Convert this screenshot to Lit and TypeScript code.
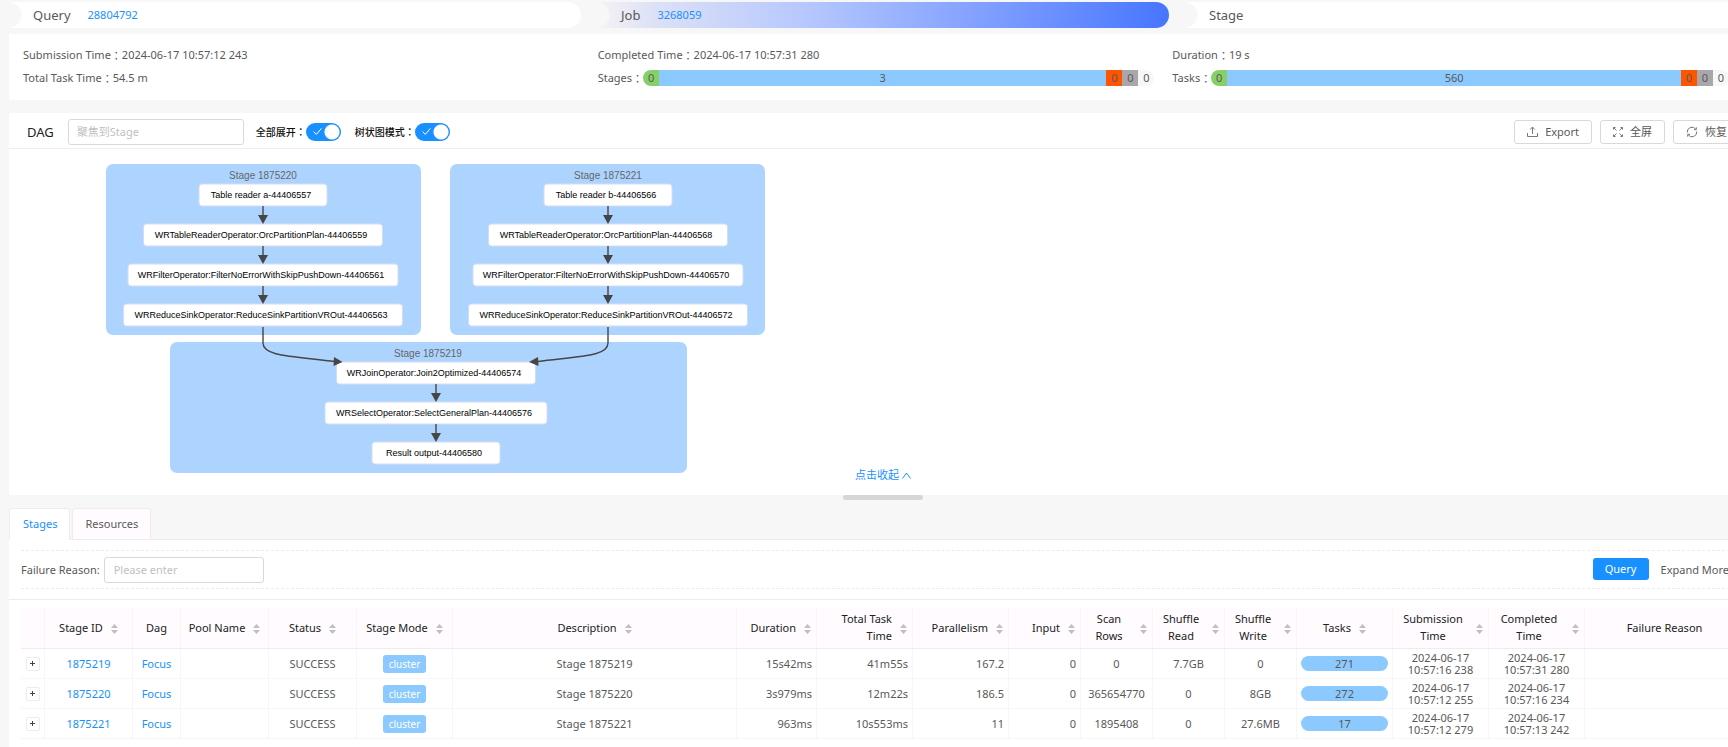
import { LitElement, html, css, svg, nothing } from "lit";
import { customElement, property } from "lit/decorators.js";
import { classMap } from "lit/directives/class-map.js";

type Align = "center" | "right";

interface Column {
  title: string;
  width?: number;
  align?: Align;
  sortable?: boolean;
}

interface StageRow {
  id: string;
  duration: string;
  taskTime: string;
  parallelism: string;
  input: string;
  scanRows: string;
  shuffleRead: string;
  shuffleWrite: string;
  tasks: string;
  submitted: [string, string];
  completed: [string, string];
}

interface DagNode {
  label: string;
  width: number;
}

interface DagCluster {
  title: string;
  x: number;
  y: number;
  width: number;
  height: number;
  cx: number;
  titleX: number;
  nodes: DagNode[];
}

const COLUMNS: Column[] = [
  { title: "", width: 24 },
  { title: "Stage ID", width: 88, sortable: true },
  { title: "Dag", width: 48 },
  { title: "Pool Name", width: 88, sortable: true },
  { title: "Status", width: 88, sortable: true },
  { title: "Stage Mode", width: 96, sortable: true },
  { title: "Description", sortable: true },
  { title: "Duration", width: 80, align: "right", sortable: true },
  { title: "Total Task Time", width: 96, align: "right", sortable: true },
  { title: "Parallelism", width: 96, align: "right", sortable: true },
  { title: "Input", width: 72, align: "right", sortable: true },
  { title: "Scan Rows", width: 72, sortable: true },
  { title: "Shuffle Read", width: 72, sortable: true },
  { title: "Shuffle Write", width: 72, sortable: true },
  { title: "Tasks", width: 96, sortable: true },
  { title: "Submission Time", width: 96, sortable: true },
  { title: "Completed Time", width: 96, sortable: true },
  { title: "Failure Reason", width: 160 },
];

const ROWS: StageRow[] = [
  {
    id: "1875219", duration: "15s42ms", taskTime: "41m55s", parallelism: "167.2", input: "0",
    scanRows: "0", shuffleRead: "7.7GB", shuffleWrite: "0", tasks: "271",
    submitted: ["2024-06-17", "10:57:16 238"], completed: ["2024-06-17", "10:57:31 280"],
  },
  {
    id: "1875220", duration: "3s979ms", taskTime: "12m22s", parallelism: "186.5", input: "0",
    scanRows: "365654770", shuffleRead: "0", shuffleWrite: "8GB", tasks: "272",
    submitted: ["2024-06-17", "10:57:12 255"], completed: ["2024-06-17", "10:57:16 234"],
  },
  {
    id: "1875221", duration: "963ms", taskTime: "10s553ms", parallelism: "11", input: "0",
    scanRows: "1895408", shuffleRead: "0", shuffleWrite: "27.6MB", tasks: "17",
    submitted: ["2024-06-17", "10:57:12 279"], completed: ["2024-06-17", "10:57:13 242"],
  },
];

const CLUSTERS: DagCluster[] = [
  {
    title: "Stage 1875220", x: 97, y: 15, width: 315, height: 171, cx: 254, titleX: 254,
    nodes: [
      { label: "Table reader a-44406557", width: 128 },
      { label: "WRTableReaderOperator:OrcPartitionPlan-44406559", width: 239 },
      { label: "WRFilterOperator:FilterNoErrorWithSkipPushDown-44406561", width: 270 },
      { label: "WRReduceSinkOperator:ReduceSinkPartitionVROut-44406563", width: 279 },
    ],
  },
  {
    title: "Stage 1875221", x: 441, y: 15, width: 315, height: 171, cx: 599, titleX: 599,
    nodes: [
      { label: "Table reader b-44406566", width: 128 },
      { label: "WRTableReaderOperator:OrcPartitionPlan-44406568", width: 239 },
      { label: "WRFilterOperator:FilterNoErrorWithSkipPushDown-44406570", width: 270 },
      { label: "WRReduceSinkOperator:ReduceSinkPartitionVROut-44406572", width: 279 },
    ],
  },
  {
    title: "Stage 1875219", x: 161, y: 193, width: 517, height: 131, cx: 427, titleX: 419,
    nodes: [
      { label: "WRJoinOperator:Join2Optimized-44406574", width: 199 },
      { label: "WRSelectOperator:SelectGeneralPlan-44406576", width: 222 },
      { label: "Result output-44406580", width: 128 },
    ],
  },
];

const FONT = css`"Noto Sans", "Noto Sans CJK SC", sans-serif`;

/* Full-width colon, centred in its em box. */
const COLON = css`
  .colon { font-family: "Noto Sans CJK TC", sans-serif; line-height: 1; }
`;

@customElement("count-bar")
export class CountBar extends LitElement {
  @property({ type: Array }) counts: number[] = [0, 0, 0, 0, 0];

  static styles = css`
    :host { display: block; flex: 1; min-width: 0; }
    .bar { display: flex; height: 16px; border-radius: 8px; overflow: hidden; line-height: 16px; text-align: center; }
    .seg { flex: 0 0 16px; }
    .done { background: #87d068; }
    .main { flex: 1; background: #8cc9ff; }
    .failed { background: #ff5500; }
    .skipped { background: #aaa7aa; }
    .rest { background: #f7f7f7; }
  `;

  render() {
    const kinds = ["done", "main", "failed", "skipped", "rest"];
    return html`<div class="bar">
      ${this.counts.map((n, i) => html`<span class="seg ${kinds[i]}">${n}</span>`)}
    </div>`;
  }
}

@customElement("toggle-switch")
export class ToggleSwitch extends LitElement {
  @property() label = "";

  static styles = [COLON, css`
    :host { display: block; }
    .wrap { display: flex; align-items: center; font-size: 10px; line-height: 18px; color: #111; font-weight: 500; }
    .track { display: grid; align-items: center; }
    .box, .tick { grid-area: 1 / 1; }
    .box {
      appearance: none; margin: 0; width: 35px; height: 18px; border-radius: 9px;
      background: radial-gradient(circle at 9px 9px, #fff 7px, transparent 8px) #bfbfbf;
    }
    .box:checked { background: radial-gradient(circle at 26px 9px, #fff 7px, transparent 8px) #1890ff; }
    .tick { margin-left: 7px; pointer-events: none; }
  `];

  render() {
    return html`<label class="wrap">
      <span>${this.label}</span><span class="colon">：</span>
      <span class="track">
        <input class="box" type="checkbox" checked />
        <svg class="tick" width="9" height="9" viewBox="0 0 9 9" fill="none" stroke="#fff">
          <path d="M0.6 4.6 L3.3 7.4 L8.4 1.4" />
        </svg>
      </span>
    </label>`;
  }
}

@customElement("stage-dag")
export class StageDag extends LitElement {
  static styles = css`
    :host { display: block; }
    .canvas { display: block; width: 100%; height: 324px; }
    .cluster { fill: #add4ff; }
    .node { fill: #fff; stroke: #d6dcf0; }
    .title { fill: #666; font: 10px "Liberation Sans", Arial, sans-serif; text-anchor: middle; }
    .label { fill: #000; font: 9px "Liberation Sans", Arial, sans-serif; text-anchor: middle; }
    .edge { fill: none; stroke: #464646; stroke-width: 1.4; }
    .head { fill: #464646; }
  `;

  private cluster(c: DagCluster) {
    return svg`
      <rect class="cluster" x=${c.x} y=${c.y} width=${c.width} height=${c.height} rx="7" />
      <text class="title" x=${c.titleX} y=${c.y + 15}>${c.title}</text>
      ${c.nodes.map((n, i) => {
        const top = c.y + 20 + i * 40;
        return svg`
          <rect class="node" x=${c.cx - n.width / 2} y=${top} width=${n.width} height="22" rx="3" />
          <text class="label" x=${c.cx - 2} y=${top + 14}>${n.label}</text>
          ${i > 0
            ? svg`<path class="edge" d="M${c.cx} ${top - 18} V${top - 6}" />
                <path class="head" d="M${c.cx - 5} ${top - 9} h10 l-5 9 z" />`
            : nothing}`;
      })}`;
  }

  render() {
    return html`<svg class="canvas" role="img" aria-label="DAG">
      ${CLUSTERS.map((c) => this.cluster(c))}
      <path class="edge" d="M254 178 V194 C254 207 280 207 326 212.5" />
      <path class="head" d="M325 208 L333.500 213 L324.500 217 z" />
      <path class="edge" d="M599 178 V194 C599 207 574 207 529 212.500" />
      <path class="head" d="M529 208 L520 213 L529.500 217 z" />
    </svg>`;
  }
}

@customElement("stage-table")
export class StageTable extends LitElement {
  static styles = css`
    :host { display: block; }
    .table { width: 100%; table-layout: fixed; border-collapse: separate; border-spacing: 0; font-size: 11px; }
    .th, .td { box-sizing: border-box; text-align: center; overflow: visible; }
    .th {
      height: 41px; padding: 0 5px 2px; background: #fffbff; color: #222; font-weight: 400; line-height: 17px;
      border-right: 1px solid #f7f7f7; border-bottom: 1px solid #f0ebf0;
    }
    .td {
      height: 30px; padding: 0 4px; line-height: 12px;
      border-right: 1px solid #f6f6f6; border-bottom: 1px solid #f6f6f6;
    }
    .right { text-align: right; }
    .head { display: inline-flex; align-items: center; gap: 8px; max-width: 100%; vertical-align: middle; }
    .sort { flex: none; margin-top: 3px; }
    .link { color: #1890ff; text-decoration: none; }
    .plus {
      display: block; margin: 0 auto; width: 14px; height: 14px; padding: 0;
      border: 1px solid #ececec; border-radius: 2px; background: #fff;
    }
    .plus-icon { display: block; margin: 0 auto; }
    .tag {
      display: inline-block; box-sizing: border-box; height: 18px; padding: 0 6px; line-height: 18px;
      border-radius: 3px; background: #8cc9ff; color: #fff; font-size: 10px; vertical-align: middle;
    }
    .bar { display: block; margin: 0; height: 15px; line-height: 15px; border-radius: 8px; background: #8cc9ff; }
  `;

  private head(c: Column) {
    return html`<th scope="col" class=${classMap({ th: true, right: c.align === "right" })}>
      ${c.sortable
        ? html`<span class="head"><span>${c.title}</span>
            <svg class="sort" width="7" height="10" viewBox="0 0 7 10" fill="#bfbfbf">
              <path d="M3.500 0 L7 4 H0 Z M3.500 10 L7 6 H0 Z" />
            </svg></span>`
        : c.title}
    </th>`;
  }

  private row(r: StageRow) {
    return html`<tr>
      <td class="td">
        <button class="plus" aria-label="Expand row">
          <svg class="plus-icon" width="5" height="5" viewBox="0 0 5 5" stroke="#444">
            <path d="M0 2.5 H5 M2.5 0 V5" />
          </svg>
        </button>
      </td>
      <td class="td"><a class="link" href="#stage">${r.id}</a></td>
      <td class="td"><a class="link" href="#dag">Focus</a></td>
      <td class="td"></td>
      <td class="td">SUCCESS</td>
      <td class="td"><span class="tag">cluster</span></td>
      <td class="td">Stage ${r.id}</td>
      <td class="td right">${r.duration}</td>
      <td class="td right">${r.taskTime}</td>
      <td class="td right">${r.parallelism}</td>
      <td class="td right">${r.input}</td>
      <td class="td">${r.scanRows}</td>
      <td class="td">${r.shuffleRead}</td>
      <td class="td">${r.shuffleWrite}</td>
      <td class="td"><span class="bar">${r.tasks}</span></td>
      <td class="td">${r.submitted[0]}<br />${r.submitted[1]}</td>
      <td class="td">${r.completed[0]}<br />${r.completed[1]}</td>
      <td class="td"></td>
    </tr>`;
  }

  render() {
    return html`<table class="table">
      <colgroup>
        ${COLUMNS.map((c) => (c.width ? html`<col width=${c.width} />` : html`<col />`))}
      </colgroup>
      <thead><tr>${COLUMNS.map((c) => this.head(c))}</tr></thead>
      <tbody>${ROWS.map((r) => this.row(r))}</tbody>
    </table>`;
  }
}

@customElement("app-root")
export class AppRoot extends LitElement {
  static styles = [COLON, css`
    :host {
      display: block; min-height: 100vh; overflow: hidden; background: #f7f7f7;
      color: #595959; font-family: ${FONT}; font-size: 11px; line-height: 16px;
    }
    /* The page is laid out slightly wider than the viewport and clipped at its right edge. */
    .page { margin: 0 -29px 0 9px; padding-top: 2px; }
    .panel { background: #fff; }

    .crumbs { display: grid; grid-template-columns: repeat(3, 1fr); gap: 16px; }
    .crumb {
      display: flex; align-items: center; gap: 17px; height: 26px; padding-left: 24px;
      border-radius: 0 13px 13px 0;
      background: radial-gradient(circle at 0 13px, #f7f7f7 12px, transparent 13px) #fff;
    }
    .active {
      background:
        radial-gradient(circle at 0 13px, #f7f7f7 12px, transparent 13px),
        linear-gradient(90deg, #f7f3f5 0%, #dce1f5 10%, #b4c6ff 38%, #4775ff 100%);
    }
    .crumb-name { font-size: 13px; }
    .link { color: #1890ff; text-decoration: none; }

    .summary {
      display: grid; grid-template-columns: repeat(3, 1fr); row-gap: 7px;
      margin-top: 6px; padding: 13px 10px 14px 14px;
    }
    .fact { display: flex; align-items: center; padding-right: 18px; white-space: nowrap; }

    .dag-panel { margin-top: 13px; }
    .toolbar {
      display: flex; align-items: center; height: 33px; padding: 2px 17px 0 18px; border-bottom: 1px solid #f0ebf0;
    }
    .heading { margin: 0 14px 0 0; font-size: 13px; font-weight: 400; color: #222; }
    .input {
      box-sizing: border-box; width: 160px; height: 26px; padding: 0 9px; border: 1px solid #d9d9d9;
      border-radius: 3px; background: #fff; color: #222; font: inherit;
    }
    .input::placeholder { color: #bfbfbf; opacity: 1; }
    .focus-input { width: 176px; margin-right: 12px; padding: 0 8px; }
    .toggles { display: flex; gap: 14px; }
    .actions { display: flex; gap: 8px; margin-left: auto; }
    .btn {
      display: flex; align-items: center; gap: 7px; height: 24px; padding: 0 12px;
      border: 1px solid #d9d9d9; border-radius: 3px; background: #fff; color: #595959; font: inherit;
    }
    .canvas { display: grid; height: 346px; }
    .canvas > * { grid-area: 1 / 1; }
    .collapse {
      align-self: end; justify-self: center; display: flex; align-items: center; gap: 3px;
      margin-bottom: 11px; padding: 0; border: 0; background: none; color: #1890ff;
      font: inherit; line-height: 18px;
    }
    .grip { width: 80px; height: 5px; margin: 0 auto; border-radius: 3px; background: #d6d6d6; }

    .tabs { display: flex; gap: 2px; margin-top: 8px; box-shadow: inset 0 -1px #f0ebf0; }
    .tab {
      height: 32px; padding: 0 12px; border: 1px solid #f0ebf0; border-radius: 3px 3px 0 0;
      background: #fffbff; color: #595959; font: inherit;
    }
    .selected { padding: 0 12px 0 13px; background: #fff; border-bottom-color: #fff; color: #1890ff; }
    .results { padding: 10px 0 40px; }
    .filter {
      display: flex; align-items: center; height: 37px; margin: 0 12px;
      border: dashed #ececec; border-width: 1px 0;
    }
    .filter-label { margin-right: 4px; }
    .submit {
      height: 22px; width: 56px; margin: 0 0 2px auto; padding: 0; border: 0; border-radius: 3px;
      background: #1890ff; color: #fff; font: inherit;
    }
    .more { margin: 0 16px 0 12px; color: #595959; text-decoration: none; white-space: nowrap; }
    .rule { height: 1px; margin: 10px 0 8px; border: 0; background: #ececec; }
    .stages { margin: 0 12px; }
  `];

  private crumb(name: string, id = "", active = false) {
    return html`<div class=${classMap({ crumb: true, active })}>
      <span class="crumb-name">${name}</span>
      ${id ? html`<a class="link" href="#${name.toLowerCase()}">${id}</a>` : nothing}
    </div>`;
  }

  private fact(name: string, value: unknown) {
    return html`<div class="fact"><span>${name}</span><span class="colon">：</span>${value}</div>`;
  }

  render() {
    return html`<main class="page">
      <nav class="crumbs">
        ${this.crumb("Query", "28804792")} ${this.crumb("Job", "3268059", true)} ${this.crumb("Stage")}
      </nav>

      <section class="panel summary">
        ${this.fact("Submission Time", "2024-06-17 10:57:12 243")}
        ${this.fact("Completed Time", "2024-06-17 10:57:31 280")}
        ${this.fact("Duration", "19 s")}
        ${this.fact("Total Task Time", "54.5 m")}
        ${this.fact("Stages", html`<count-bar .counts=${[0, 3, 0, 0, 0]}></count-bar>`)}
        ${this.fact("Tasks", html`<count-bar .counts=${[0, 560, 0, 0, 0]}></count-bar>`)}
      </section>

      <section class="panel dag-panel">
        <div class="toolbar">
          <h2 class="heading">DAG</h2>
          <input class="input focus-input" aria-label="Stage" placeholder="聚焦到Stage" />
          <div class="toggles">
            <toggle-switch label="全部展开"></toggle-switch>
            <toggle-switch label="树状图模式"></toggle-switch>
          </div>
          <div class="actions">
            <button class="btn">
              <svg width="11" height="11" viewBox="0 0 11 11" fill="none" stroke="#777">
                <path d="M0.5 7 V10.500 H10.500 V7 M5.500 8 V1.500 M3.200 3.500 L5.500 1 L7.800 3.500" />
              </svg>
              Export
            </button>
            <button class="btn">
              <svg width="10" height="10" viewBox="0 0 10 10" fill="none" stroke="#777">
                <path d="M0.500 2.500 V0.500 H2.500 M0.500 0.500 L3.500 3.500 M7.500 0.500 H9.500 V2.500 M9.500 0.500 L6.500 3.500 M0.500 7.500 V9.500 H2.500 M0.500 9.500 L3.500 6.500 M7.500 9.500 H9.500 V7.500 M9.500 9.500 L6.500 6.500" />
              </svg>
              全屏
            </button>
            <button class="btn">
              <svg width="12" height="12" viewBox="0 0 12 12" fill="none" stroke="#777">
                <path d="M1.300 6.500 A4.700 4.700 0 0 1 9.800 3.200 M10.700 5.500 A4.700 4.700 0 0 1 2.200 8.800" />
                <path d="M10.300 1.300 V3.700 H8 M1.700 10.700 V8.300 H4" />
              </svg>
              恢复
            </button>
          </div>
        </div>
        <div class="canvas">
          <stage-dag></stage-dag>
          <button class="collapse">
            点击收起
            <svg width="9" height="7" viewBox="0 0 9 7" fill="none" stroke="#1890ff">
              <path d="M0.500 6.500 L4.500 1 L8.500 6.500" />
            </svg>
          </button>
        </div>
      </section>
      <div class="grip"></div>

      <div class="tabs" role="tablist">
        <button class="tab selected" role="tab" aria-selected="true">Stages</button>
        <button class="tab" role="tab" aria-selected="false">Resources</button>
      </div>
      <section class="panel results">
        <form class="filter">
          <label class="filter-label" for="reason">Failure Reason:</label>
          <input class="input" id="reason" placeholder="Please enter" />
          <button class="submit" type="button">Query</button>
          <a class="more" href="#more">Expand More</a>
        </form>
        <hr class="rule" />
        <stage-table class="stages"></stage-table>
      </section>
    </main>`;
  }
}
